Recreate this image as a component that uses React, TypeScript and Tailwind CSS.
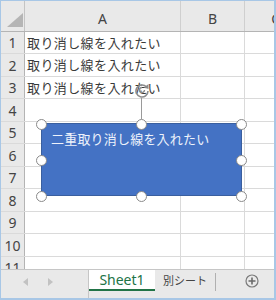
import React from "react";

const jp = { fontFamily: '"Noto Sans CJK JP", "Noto Sans", sans-serif' };
const latin = { fontFamily: '"Noto Sans", "Liberation Sans", sans-serif' };

const heights = [22, 23, 22, 23, 22, 23, 22, 23, 22, 23, 22];
const rowH = [
  "h-[22px]",
  "h-[23px]",
  "h-[22px]",
  "h-[23px]",
  "h-[22px]",
  "h-[23px]",
  "h-[22px]",
  "h-[23px]",
  "h-[22px]",
  "h-[23px]",
  "h-[22px]",
];

function Handle({ x, y }: { x: number; y: number }) {
  return (
    <div
      className="absolute h-[11px] w-[11px] rounded-full border border-[#8a8a8a] bg-white"
      style={{ left: x - 5.5, top: y - 5.5 }}
    />
  );
}

export default function App() {
  return (
    <div className="relative flex h-[300px] w-[276px] flex-col overflow-hidden border-b-2 border-l border-r-2 border-t border-[#a8c7e6] bg-white">
      {/* column header */}
      <div className="flex h-[31px] shrink-0 border-b border-[#b4b4b4] bg-[#e9e9e9] text-[14px] text-[#444]" style={latin}>
        <div className="relative w-[24px] border-r border-[#c4c4c4]">
          <svg className="absolute left-0 top-0" width="23" height="30">
            <polygon points="6,26 22,26 22,12" fill="#b5b5b5" />
          </svg>
        </div>
        <div className="flex w-[156px] items-end justify-center border-r border-[#cfcfcf] pb-[3px] leading-[18px]">A</div>
        <div className="flex w-[64px] items-end justify-center border-r border-[#cfcfcf] pb-[3px] leading-[18px]">B</div>
        <div className="flex flex-1 items-end justify-end pb-[3px] leading-[18px]">
          <span className="-mr-[6px]">C</span>
        </div>
      </div>

      {/* rows */}
      <div className="h-[237px] shrink-0 overflow-hidden">
        {heights.map((_, i) => (
          <div key={i} className={`flex ${rowH[i]} border-b border-[#dadada]`}>
            <div
              className="flex w-[24px] items-center justify-center border-r border-[#b4b4b4] bg-[#e9e9e9] text-[14px] text-[#444]"
              style={latin}
            >
              {i + 1}
            </div>
            <div
              className="flex w-[156px] items-center border-r border-[#dadada] pl-[2px] text-[13px] tracking-[0.4px] text-[#3a3a3a]"
              style={jp}
            >
              {i < 3 ? "取り消し線を入れたい" : ""}
            </div>
            <div className="w-[64px] border-r border-[#dadada]" />
            <div className="flex-1" />
          </div>
        ))}
      </div>

      {/* sheet tabs */}
      <div className="flex h-[29px] shrink-0 border-t border-[#c6c6c6] bg-[#e9e9e9]" style={jp}>
        <div className="flex w-[88px] items-center gap-[20px] border-r border-[#c6c6c6] pl-[22px] pb-[4px]">
          <svg width="5" height="8">
            <polygon points="5,0 5,8 0,4" fill="#c2c2c2" />
          </svg>
          <svg width="5" height="8">
            <polygon points="0,0 0,8 5,4" fill="#c2c2c2" />
          </svg>
        </div>
        <div
          className="flex h-[21px] w-[66px] items-center justify-center border-b-2 border-[#217346] bg-white text-[14px] text-[#217346]"
          style={latin}
        >
          Sheet1
        </div>
        <div className="flex h-[21px] w-[60px] items-center justify-center text-[11px] text-[#444]">別シート</div>
        <div className="mt-[3px] h-[18px] w-px bg-[#b0b0b0]" />
        <div className="flex flex-1 items-start pl-[29px] pt-[4px]">
          <svg width="14" height="14" viewBox="0 0 14 14">
            <circle cx="7" cy="7" r="6" fill="none" stroke="#7a7a7a" strokeWidth="1.2" />
            <path d="M7 3.5 V10.5 M3.5 7 H10.5" stroke="#6a6a6a" strokeWidth="1.6" />
          </svg>
        </div>
      </div>

      {/* shape overlay */}
      <div
        className="absolute left-[40px] top-[122px] h-[73px] w-[201px] border border-[#3a5f9f] bg-[#4472c4] pl-[9px] pt-[5px] text-[13px] tracking-[0.2px] text-[#eef2fb]"
        style={jp}
      >
        二重取り消し線を入れたい
      </div>
      <div className="absolute left-[140px] top-[97px] h-[21px] w-px bg-[#9a9a9a]" />
      <svg className="absolute left-[133px] top-[81px]" width="16" height="16" viewBox="0 0 16 16">
        <path d="M12.5 5 A6 6 0 1 0 14 9" fill="none" stroke="#8c8c8c" strokeWidth="1.6" />
        <polygon points="14.5,2 14.5,7 9.8,5.6" fill="#8c8c8c" />
        <path d="M8 5.5 A2.5 2.5 0 1 0 10.5 8" fill="none" stroke="#8c8c8c" strokeWidth="1.4" />
      </svg>
      <Handle x={40.5} y={123} />
      <Handle x={140.5} y={123} />
      <Handle x={240.5} y={123} />
      <Handle x={40.5} y={159} />
      <Handle x={240.5} y={159} />
      <Handle x={40.5} y={195} />
      <Handle x={140.5} y={195} />
      <Handle x={240.5} y={195} />
    </div>
  );
}
